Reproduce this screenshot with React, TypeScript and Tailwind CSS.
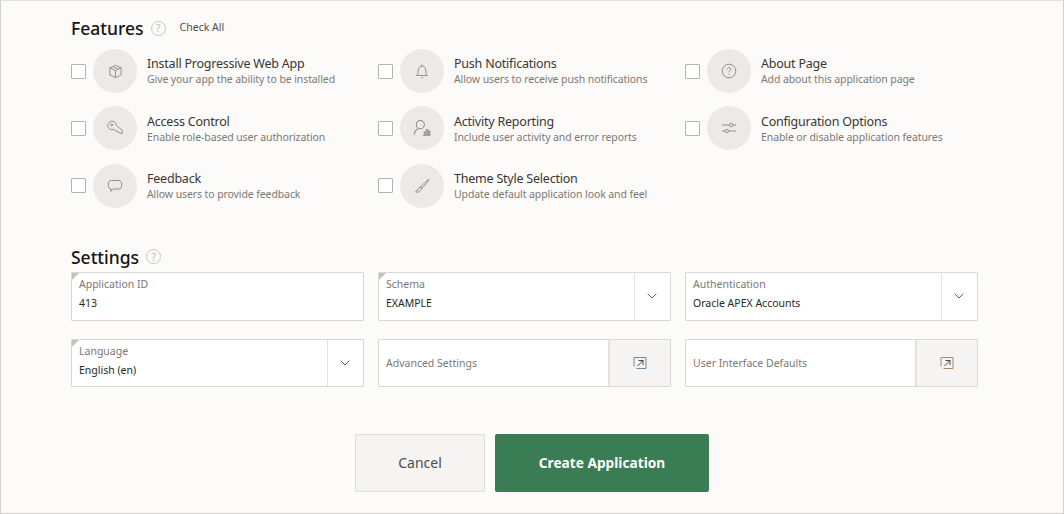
import React from 'react';

type Feature = { title: string; desc: string; icon: React.ReactNode };

const Svg: React.FC<{ children: React.ReactNode; className?: string }> = ({ children, className }) => (
  <svg viewBox="0 0 16 16" fill="none" stroke="#8a8582" strokeWidth="0.9" className={className ?? 'w-4 h-4'}>
    {children}
  </svg>
);

const features: Feature[] = [
  {
    title: 'Install Progressive Web App',
    desc: 'Give your app the ability to be installed',
    icon: (
      <Svg className="w-[15px] h-[15px]">
        <path d="M8 1.5l6 2.6v7.600l-6 2.800-6-2.800V4.100z" />
        <path d="M2 4.100l6 2.800 6-2.800M8 6.900v7.600M5 2.800l6 2.700" />
      </Svg>
    ),
  },
  {
    title: 'Push Notifications',
    desc: 'Allow users to receive push notifications',
    icon: (
      <Svg>
        <path d="M2.500 12.500c1.200-1 1.700-2.200 1.700-4.500 0-2.700 1.500-5 3.800-5s3.800 2.300 3.800 5c0 2.300.5 3.500 1.700 4.500z" />
        <path d="M8 1.500V3M7.200 14.800h1.600" />
      </Svg>
    ),
  },
  {
    title: 'About Page',
    desc: 'Add about this application page',
    icon: (
      <Svg>
        <circle cx="8" cy="8" r="6.800" />
        <path d="M6.200 6.300c0-1 .8-1.700 1.800-1.700s1.800.7 1.800 1.600c0 1.300-1.800 1.400-1.800 3M8 10.600v1" />
      </Svg>
    ),
  },
  {
    title: 'Access Control',
    desc: 'Enable role-based user authorization',
    icon: (
      <Svg>
        <path d="M.8 5.500C.8 3 2.800 1.200 5 1.200c2.400 0 4.200 1.800 4.300 4.100l5.900 5v3.200h-1.500l-.8-1.100-1 .4-.7-1.200-1 .3-.8-1.300-1 .1-1.300-1.200C3.600 10.300.8 8.400.8 5.500z" />
        <circle cx="4.700" cy="4.800" r="1" />
      </Svg>
    ),
  },
  {
    title: 'Activity Reporting',
    desc: 'Include user activity and error reports',
    icon: (
      <Svg className="w-[18px] h-[18px]">
        <circle cx="6.500" cy="5" r="3.600" />
        <path d="M1 14c.3-2.700 1.700-4.500 3.600-5.300" />
        <path d="M9 14.500h6.500M10 14v-2.500h1.500V14M11.800 14V9.500h1.500V14M13.600 14v-3h1.400v3" />
      </Svg>
    ),
  },
  {
    title: 'Configuration Options',
    desc: 'Enable or disable application features',
    icon: (
      <Svg>
        <path d="M1 5h7.500M12 5h3M1 11h3M7.500 11H15" />
        <circle cx="10.200" cy="5" r="1.700" />
        <circle cx="5.800" cy="11" r="1.700" />
      </Svg>
    ),
  },
  {
    title: 'Feedback',
    desc: 'Allow users to provide feedback',
    icon: (
      <Svg>
        <path d="M4 2.500h8c1.600 0 2.700 1.200 2.700 4.200S13.600 11 12 11H6.500l-2.700 2.300.4-2.300C2.400 11 1.300 9.700 1.300 6.700S2.400 2.500 4 2.500z" />
      </Svg>
    ),
  },
  {
    title: 'Theme Style Selection',
    desc: 'Update default application look and feel',
    icon: (
      <Svg>
        <path d="M15 1.500c-2.500 1.500-6 4.500-8.500 7.500l1.300 1.300C10.800 7.500 13.500 4 15 1.500z" />
        <path d="M6.300 9.400c-2 .2-2.300 1.500-2.700 2.600-.3.800-1.200 1.500-2.100 1.700 2.200 1 5 .5 6.100-3.200z" />
      </Svg>
    ),
  },
];

const FeatureRow: React.FC<{ item: Feature }> = ({ item }) => (
  <div className="flex items-center h-11">
    <span className="w-[15px] h-[15px] bg-white border border-[#b5b2af] rounded-[1px] shrink-0" />
    <span className="ml-[7px] w-11 h-11 rounded-full bg-[#ece9e6] flex items-center justify-center shrink-0">
      {item.icon}
    </span>
    <div className="ml-[10px] pb-[0.6px]">
      <div className="text-[12.500px] leading-[17px] tracking-[-0.22px] text-[#3a3633]">{item.title}</div>
      <div className="text-[10.500px] leading-[14px] tracking-[-0.1px] text-[#7d7874]">{item.desc}</div>
    </div>
  </div>
);

const Help: React.FC = () => (
  <span className="w-[15px] h-[15px] rounded-full border border-[#c9c6c3] text-[#bdbab7] text-[10px] leading-none flex items-center justify-center">
    ?
  </span>
);

const Corner: React.FC = () => (
  <span className="absolute left-0 top-0 w-0 h-0 border-t-[7px] border-r-[7px] border-t-[#c4c1be] border-r-transparent" />
);

const Chevron: React.FC = () => (
  <div className="w-9 self-stretch border-l border-[#e4e2df] flex items-center justify-center shrink-0">
    <svg viewBox="0 0 10 6" fill="none" stroke="#4a4643" strokeWidth="0.9" className="w-[10px] h-[6px] -ml-[2px]">
      <path d="M.7.700L5 5l4.300-4.300" />
    </svg>
  </div>
);

const Field: React.FC<{ label: string; value: string; corner?: boolean; select?: boolean; tall?: boolean }> = ({
  label,
  value,
  corner,
  select,
  tall,
}) => (
  <div className={`relative flex bg-white border border-[#dad8d5] rounded-[1px] ${tall ? 'h-[49px]' : 'h-12'}`}>
    {corner && <Corner />}
    <div className="flex-1 pl-[7px] pt-[4px]">
      <div className="text-[10.500px] leading-[15px] text-[#7d7874]">{label}</div>
      <div className="mt-[4px] text-[10.500px] leading-[15px] text-[#2b2825]">{value}</div>
    </div>
    {select && <Chevron />}
  </div>
);

const LinkField: React.FC<{ label: string; tint: string }> = ({ label, tint }) => (
  <div className="flex h-12 bg-white border border-[#dad8d5] rounded-[1px]">
    <div className="flex-1 pl-[7px] pt-[2px] flex items-center text-[10.500px] text-[#7d7874]">{label}</div>
    <div className="w-[62px] border-l-2 border-[#e4e2df] bg-[#f5f4f2] flex items-center justify-center">
      <svg viewBox="0 0 14 14" fill="none" strokeWidth="1" className="w-[14px] h-[14px]">
        <path d="M1 10.500V1.500h12V12.500H3.500" stroke={tint} />
        <path d="M4.500 10l5.500-5.500M5.500 4.500H10V9" stroke="#4a4643" />
      </svg>
    </div>
  </div>
);

export default function App() {
  return (
    <div
      className="w-[1064px] h-[514px] bg-[#fcfbfa] border border-[#d2d0ce] border-t-[#e4e2df] pl-[70px] overflow-hidden"
      style={{ fontFamily: '"Noto Sans", "Open Sans", sans-serif' }}
    >
      <div className="w-[907px]">
        <div className="flex items-center h-[26px] mt-[14px]">
          <h2 className="text-[17.500px] leading-[26px] font-medium text-[#161513]">Features</h2>
          <span className="ml-[7px]">
            <Help />
          </span>
          <span className="ml-[14px] text-[10.500px] text-[#4f4b48]">Check All</span>
        </div>
        <div className="grid grid-cols-3 gap-x-[14px] gap-y-[13.400px] mt-[8px]">
          {features.map((f) => (
            <FeatureRow key={f.title} item={f} />
          ))}
        </div>
        <div className="flex items-center h-[26px] mt-[36px]">
          <h2 className="text-[17.500px] leading-[26px] font-medium text-[#161513]">Settings</h2>
          <span className="ml-[7px]">
            <Help />
          </span>
        </div>
        <div className="grid grid-cols-3 gap-x-[14px] gap-y-[18px] mt-[2px]">
          <Field label="Application ID" value="413" corner tall />
          <Field label="Schema" value="EXAMPLE" corner select tall />
          <Field label="Authentication" value="Oracle APEX Accounts" select tall />
          <Field label="Language" value="English (en)" corner select />
          <LinkField label="Advanced Settings" tint="#6b8aa6" />
          <LinkField label="User Interface Defaults" tint="#a58a63" />
        </div>
        <div className="flex justify-center gap-[10px] pl-[15px] mt-[47px]">
          <button className="w-[130px] h-[58px] bg-[#f5f4f2] border border-[#dfdddb] rounded-[1px] text-[14px] text-[#4f4b48]">
            Cancel
          </button>
          <button className="w-[214px] h-[58px] bg-[#3a7d54] rounded-[2px] text-[13.700px] font-bold text-white">
            Create Application
          </button>
        </div>
      </div>
    </div>
  );
}
